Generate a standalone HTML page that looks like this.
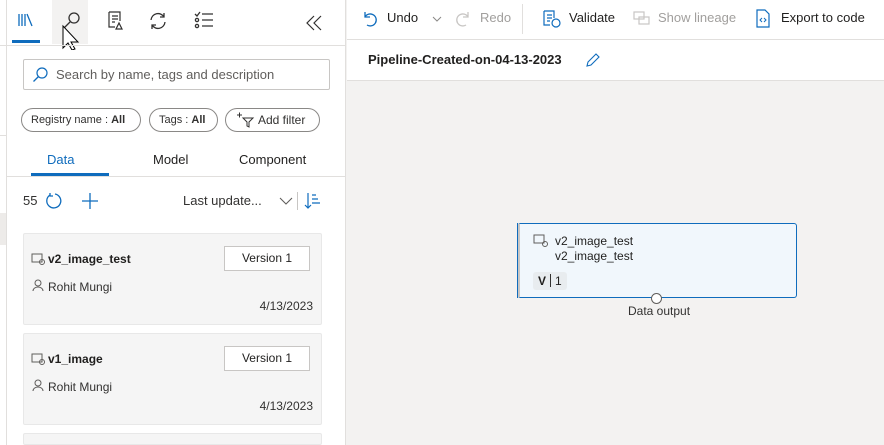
<!DOCTYPE html>
<html style="width:884px;height:445px;overflow:hidden"><head><style>
*{box-sizing:border-box;margin:0;padding:0}
body{width:884px;height:445px;overflow:hidden;font-family:"Liberation Sans",sans-serif;font-size:13px;color:#201f1e;background:#f3f2f1;position:relative}
.abs{position:absolute;white-space:nowrap}
.lstrip{left:0;top:0;width:7px;height:445px;background:#fff;border-right:1px solid #e1dfdd}
.side{left:7px;top:0;width:339px;height:445px;background:#fff;border-right:1px solid #e1dfdd;overflow:hidden}
.chip{position:absolute;top:108px;height:24px;border:1px solid #8a8886;border-radius:12px;font-size:11px;line-height:22px;padding:0 9px;color:#323130;white-space:nowrap}
.card{position:absolute;left:16px;width:299px;height:92px;background:#f5f5f5;border:1px solid #e8e8e8;border-radius:2px}
.card .nm{position:absolute;left:24px;top:18px;font-size:12px;font-weight:bold}
.card .au{position:absolute;left:24px;top:46px;font-size:12px;color:#323130}
.card .dt{position:absolute;right:8px;top:65px;font-size:12px;color:#323130}
.card .vb{position:absolute;left:200px;top:12px;width:86px;height:25px;background:#fff;border:1px solid #c8c6c4;font-size:12px;text-align:center;line-height:23px}
.tb{font-size:13px;top:10px}
</style></head><body>
<div class="abs lstrip"><div class="abs" style="left:0;top:45px;width:6px;height:1px;background:#e1dfdd"></div><div class="abs" style="left:0;top:135px;width:6px;height:1px;background:#e1dfdd"></div><div class="abs" style="left:0;top:213px;width:6px;height:32px;background:#edebe9"></div></div>
<div class="abs side">
 <div class="abs" style="left:45px;top:0;width:36px;height:44px;background:#f3f2f1"></div>
 <svg class="abs" style="left:10px;top:12px" width="22" height="16"><g stroke="#0f6cbd" stroke-width="1.3" fill="none"><path d="M2 2v12M5 2v12M8 2v12M10 2l5 12"/></g></svg>
 <div class="abs" style="left:5px;top:40px;width:28px;height:3px;background:#0f6cbd"></div>
 <svg class="abs" style="left:50px;top:10px" width="26" height="40"><circle cx="17" cy="8" r="5" stroke="#323130" stroke-width="1.3" fill="none"/><path d="M13 12l-7 7" stroke="#323130" stroke-width="1.3"/><path d="M6 16l0 22l5-5l4 7l3-1l-4-7l7 0z" fill="#fff" stroke="#000" stroke-width="1"/></svg>
 <svg class="abs" style="left:100px;top:11px" width="18" height="20"><g stroke="#323130" stroke-width="1.2" fill="none"><path d="M2 1h11v9M2 1v15h6M5 5h6M5 8h6M5 11h3M12 12l-3 6h6z"/></g></svg>
 <svg class="abs" style="left:141px;top:11px" width="20" height="20"><g stroke="#323130" stroke-width="1.3" fill="none"><path d="M3 9a7 7 0 0 1 13-3M17 11a7 7 0 0 1-13 3M16 2v4h-4M4 18v-4h4"/></g></svg>
 <svg class="abs" style="left:186px;top:10px" width="22" height="20"><g stroke="#323130" stroke-width="1.3" fill="none"><path d="M2 4l2 2l3-4M9 4h11M9 10h11M9 16h11"/><circle cx="4" cy="10" r="1.6"/><circle cx="4" cy="16" r="1.6"/></g></svg>
 <svg class="abs" style="left:298px;top:14px" width="20" height="18"><g stroke="#323130" stroke-width="1.2" fill="none"><path d="M9 2l-7 7l7 7M16 2l-7 7l7 7"/></g></svg>
 <div class="abs" style="left:0;top:45px;width:339px;height:1px;background:#e1dfdd"></div>
 <div class="abs" style="left:16px;top:59px;width:307px;height:31px;border:1px solid #c8c6c4;border-radius:2px"></div>
 <svg class="abs" style="left:24px;top:66px" width="18" height="18"><circle cx="11" cy="7" r="5" stroke="#0f6cbd" stroke-width="1.2" fill="none"/><path d="M7.5 10.5l-5 5" stroke="#0f6cbd" stroke-width="1.3"/></svg>
 <div class="abs" style="left:49px;top:67px;font-size:13px;color:#605e5c">Search by name, tags and description</div>
 <div class="chip" style="left:14px;width:120px">Registry name : <b>All</b></div>
 <div class="chip" style="left:142px;width:69px">Tags : <b>All</b></div>
 <div class="chip" style="left:218px;width:95px;font-size:12px;padding-left:32px">Add filter</div>
 <svg class="abs" style="left:227px;top:110px" width="22" height="18"><path d="M3 5h5M5.5 2.5v5" stroke="#323130" stroke-width="1"/><path d="M9 8h10l-4 4v5l-2-1v-4z" stroke="#323130" stroke-width="1" fill="none"/></svg>
 <div class="abs" style="left:40px;top:152px;font-size:13px;color:#0f6cbd">Data</div>
 <div class="abs" style="left:146px;top:152px;font-size:13px">Model</div>
 <div class="abs" style="left:232px;top:152px;font-size:13px">Component</div>
 <div class="abs" style="left:24px;top:173px;width:78px;height:3px;background:#0f6cbd"></div>
 <div class="abs" style="left:0;top:176px;width:339px;height:1px;background:#e1dfdd"></div>
 <div class="abs" style="left:16px;top:193px;font-size:13px;color:#323130">55</div>
 <svg class="abs" style="left:37px;top:191px" width="20" height="20"><path d="M6 4a7 7 0 1 0 5-1" stroke="#0f6cbd" stroke-width="1.3" fill="none"/><path d="M6 2v3h3" stroke="#0f6cbd" stroke-width="1.3" fill="none"/></svg>
 <svg class="abs" style="left:74px;top:192px" width="18" height="18"><path d="M9 1v16M1 9h16" stroke="#0f6cbd" stroke-width="1.3"/></svg>
 <div class="abs" style="left:176px;top:193px;font-size:13px;color:#323130">Last update...</div>
 <svg class="abs" style="left:272px;top:196px" width="14" height="10"><path d="M1 2l6 6l6-6" stroke="#605e5c" stroke-width="1.1" fill="none"/></svg>
 <div class="abs" style="left:290px;top:192px;width:1px;height:18px;background:#c8c6c4"></div>
 <svg class="abs" style="left:297px;top:192px" width="20" height="18"><path d="M4 1v15M1 13l3 3l3-3M8 3h4M8 7h6M8 11h8" stroke="#0f6cbd" stroke-width="1.2" fill="none"/></svg>
 <div class="card" style="top:233px">
  <svg class="abs" style="left:7px;top:19px" width="15" height="13"><g stroke="#605e5c" stroke-width="1" fill="none"><rect x="1" y="1" width="10" height="8"/><circle cx="11" cy="9" r="2.5"/></g></svg>
  <div class="nm">v2_image_test</div><div class="vb">Version 1</div>
  <svg class="abs" style="left:8px;top:45px" width="12" height="13"><circle cx="6" cy="4" r="3" stroke="#605e5c" fill="none"/><path d="M1 12a5 4 0 0 1 10 0" stroke="#605e5c" fill="none"/></svg>
  <div class="au">Rohit Mungi</div><div class="dt">4/13/2023</div>
 </div>
 <div class="card" style="top:333px">
  <svg class="abs" style="left:7px;top:19px" width="15" height="13"><g stroke="#605e5c" stroke-width="1" fill="none"><rect x="1" y="1" width="10" height="8"/><circle cx="11" cy="9" r="2.5"/></g></svg>
  <div class="nm">v1_image</div><div class="vb">Version 1</div>
  <svg class="abs" style="left:8px;top:45px" width="12" height="13"><circle cx="6" cy="4" r="3" stroke="#605e5c" fill="none"/><path d="M1 12a5 4 0 0 1 10 0" stroke="#605e5c" fill="none"/></svg>
  <div class="au">Rohit Mungi</div><div class="dt">4/13/2023</div>
 </div>
 <div class="card" style="top:433px;height:12px"></div>
</div>
<div class="abs" style="left:347px;top:0;width:537px;height:80px;background:#fff"></div>
<div class="abs" style="left:347px;top:39px;width:537px;height:1px;background:#e1dfdd"></div>
<div class="abs" style="left:347px;top:80px;width:537px;height:1px;background:#e1dfdd"></div>
<svg class="abs" style="left:362px;top:10px" width="16" height="18"><path d="M3 2v5h5M3 7a6 6 0 1 1 2 8" stroke="#0f6cbd" stroke-width="1.3" fill="none"/></svg>
<div class="abs tb" style="left:387px">Undo</div>
<svg class="abs" style="left:432px;top:15px" width="10" height="8"><path d="M1 2l4 4l4-4" stroke="#8a8886" fill="none"/></svg>
<svg class="abs" style="left:455px;top:10px" width="16" height="18"><path d="M13 2v5h-5M13 7a6 6 0 1 0-2 8" stroke="#c8c6c4" stroke-width="1.3" fill="none"/></svg>
<div class="abs tb" style="left:480px;color:#a19f9d">Redo</div>
<div class="abs" style="left:522px;top:4px;width:1px;height:30px;background:#e1dfdd"></div>
<svg class="abs" style="left:542px;top:9px" width="20" height="20"><path d="M2 2h10v7M2 2v14h6M5 6h5M5 9h5M5 12h3" stroke="#0f6cbd" stroke-width="1.2" fill="none"/><circle cx="14" cy="14" r="4" stroke="#0f6cbd" stroke-width="1.2" fill="none"/></svg>
<div class="abs tb" style="left:569px">Validate</div>
<svg class="abs" style="left:632px;top:10px" width="20" height="18"><g stroke="#c8c6c4" stroke-width="1.2" fill="none"><rect x="2" y="2" width="10" height="7"/><rect x="7" y="7" width="10" height="7"/></g></svg>
<div class="abs tb" style="left:658px;color:#a19f9d">Show lineage</div>
<svg class="abs" style="left:755px;top:9px" width="16" height="20"><path d="M2 1h8l4 4v13H2z" stroke="#0f6cbd" stroke-width="1.2" fill="none"/><path d="M7 9l-2 2l2 2M9 9l2 2l-2 2" stroke="#0f6cbd" stroke-width="1" fill="none"/></svg>
<div class="abs tb" style="left:781px">Export to code</div>
<div class="abs" style="left:368px;top:52px;font-size:13px;font-weight:bold">Pipeline-Created-on-04-13-2023</div>
<svg class="abs" style="left:585px;top:52px" width="16" height="16"><path d="M2 14l1-4l8-8l3 3l-8 8z" stroke="#0f6cbd" stroke-width="1.1" fill="none"/></svg>
<div class="abs" style="left:517px;top:223px;width:280px;height:75px;background:#f1f7fc;border:1px solid #0f6cbd;border-left:3px solid #c8c6c4;border-radius:3px"></div>
<div class="abs" style="left:517px;top:223px;width:1px;height:75px;background:#0f6cbd"></div>
<svg class="abs" style="left:533px;top:234px" width="16" height="14"><g stroke="#605e5c" stroke-width="1" fill="none"><rect x="1" y="1" width="10" height="8"/><circle cx="12" cy="10" r="2.5"/></g></svg>
<div class="abs" style="left:555px;top:234px;font-size:12px">v2_image_test</div>
<div class="abs" style="left:555px;top:249px;font-size:12px">v2_image_test</div>
<div class="abs" style="left:533px;top:272px;width:34px;height:18px;background:#e8ecef;border-radius:3px;font-size:12px;line-height:18px;padding-left:5px"><b>V</b><span style="display:inline-block;width:1px;height:13px;background:#323130;margin:0 4px;vertical-align:-2px"></span>1</div>
<div class="abs" style="left:651px;top:293px;width:11px;height:11px;border:1px solid #605e5c;border-radius:50%;background:#fff"></div>
<div class="abs" style="left:628px;top:304px;font-size:12px;color:#323130">Data output</div>
</body></html>
